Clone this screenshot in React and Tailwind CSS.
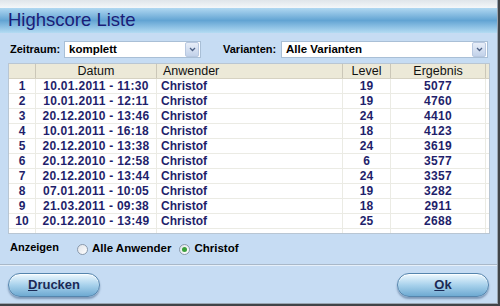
import React from 'react';

const rows = [
  ['1', '10.01.2011 - 11:30', 'Christof', '19', '5077'],
  ['2', '10.01.2011 - 12:11', 'Christof', '19', '4760'],
  ['3', '20.12.2010 - 13:46', 'Christof', '24', '4410'],
  ['4', '10.01.2011 - 16:18', 'Christof', '18', '4123'],
  ['5', '20.12.2010 - 13:38', 'Christof', '24', '3619'],
  ['6', '20.12.2010 - 12:58', 'Christof', '6', '3577'],
  ['7', '20.12.2010 - 13:44', 'Christof', '24', '3357'],
  ['8', '07.01.2011 - 10:05', 'Christof', '19', '3282'],
  ['9', '21.03.2011 - 09:38', 'Christof', '18', '2911'],
  ['10', '20.12.2010 - 13:49', 'Christof', '25', '2688'],
];

function Select({ value, className }) {
  return (
    <div className={`h-[17px] bg-white border border-[#a9bfd6] flex items-center ${className}`}>
      <span className="flex-1 pl-[4px] text-[11.5px] font-bold text-black leading-none">{value}</span>
      <div className="w-[14px] h-[15px] mr-[1px] rounded-[2px] bg-gradient-to-b from-[#e8eef8] to-[#c2d2ea] border border-[#b8c8e0] flex items-center justify-center">
        <svg width="7" height="5" viewBox="0 0 7 5">
          <path d="M1 1 L3.5 3.5 L6 1" fill="none" stroke="#4d6185" strokeWidth="1.3" />
        </svg>
      </div>
    </div>
  );
}

function Radio({ checked, label }) {
  return (
    <label className="flex items-center gap-[4px]">
      <span className="w-[11px] h-[11px] rounded-full border border-[#8a99ab] bg-gradient-to-br from-[#dfe3e8] to-white flex items-center justify-center">
        {checked && <span className="w-[5px] h-[5px] rounded-full bg-[#3aa03a]" />}
      </span>
      <span className="text-[11.5px] font-bold text-black">{label}</span>
    </label>
  );
}

function AquaButton({ children }) {
  return (
    <button className="w-[92px] h-[24px] rounded-full border border-[#5585ad] bg-gradient-to-b from-[#eef8fe] via-[#a8d2ec] to-[#6eaad2] shadow-[0_2px_2px_rgba(40,70,110,0.45),inset_0_1px_1px_rgba(255,255,255,0.9)] text-[13px] font-bold text-[#1b2a55]">
      {children}
    </button>
  );
}

export default function App() {
  const cols = 'grid grid-cols-[27px_121px_186px_48px_1fr]';
  return (
    <div className="w-[500px] h-[306px] bg-[#404448] font-['Liberation_Sans',Arial,sans-serif] overflow-hidden">
      <div className="w-[498px] h-[304px] bg-[#c6dcf3] border-r border-b border-[#9aa6b2] flex flex-col">
        <div className="h-[8px] bg-gradient-to-b from-[#dfe5ea] to-[#f4f7f9]" />
        <div className="h-[25px] bg-gradient-to-b from-[#b0d8f1] via-[#62a4d3] to-[#b4dcf3] flex items-center pl-[8px]">
          <span className="text-[18.5px] text-[#1a1d78] leading-none">Highscore Liste</span>
        </div>

        <div className="mt-[8px] h-[17px] flex items-center pl-[10px]">
          <span className="w-[54px] text-[11px] font-bold text-black">Zeitraum:</span>
          <Select value="komplett" className="w-[137px]" />
          <span className="ml-[22px] w-[58px] text-[11px] font-bold text-black">Varianten:</span>
          <Select value="Alle Varianten" className="w-[207px]" />
        </div>

        <div className="mt-[5px] ml-[8px] w-[482px] h-[171px] bg-white border border-[#b9c6d3] flex flex-col">
          <div className={`${cols} h-[15px] bg-[#ece9d8] border-b border-[#d6d2c2] text-[12.5px] text-[#111] leading-[14px]`}>
            <div className="border-r border-[#cbc7b8]" />
            <div className="text-center border-r border-[#cbc7b8]">Datum</div>
            <div className="pl-[6px] border-r border-[#cbc7b8]">Anwender</div>
            <div className="text-center border-r border-[#cbc7b8]">Level</div>
            <div className="text-center border-r border-[#cbc7b8] mr-[3px]">Ergebnis</div>
          </div>
          {rows.map((r) => (
            <div key={r[0]} className={`${cols} h-[15px] border-b border-[#ebebe4] text-[12px] font-bold text-[#1f1f6b] leading-[14px]`}>
              <div className="text-center border-r border-[#ebebe4]">{r[0]}</div>
              <div className="text-center tracking-[0.3px] border-r border-[#ebebe4]">{r[1]}</div>
              <div className="pl-[4px] border-r border-[#ebebe4]">{r[2]}</div>
              <div className="text-center border-r border-[#ebebe4]">{r[3]}</div>
              <div className="text-center tracking-[0.3px] border-r border-[#ebebe4] mr-[3px]">{r[4]}</div>
            </div>
          ))}
          <div className={`${cols} flex-1`}>
            <div className="border-r border-[#ebebe4]" />
            <div className="border-r border-[#ebebe4]" />
            <div className="border-r border-[#ebebe4]" />
            <div className="border-r border-[#ebebe4]" />
            <div className="border-r border-[#ebebe4] mr-[3px]" />
          </div>
        </div>

        <div className="h-[30px] flex items-center pl-[10px]">
          <span className="w-[67px] text-[11px] font-bold text-black -mt-[3px]">Anzeigen</span>
          <div className="flex items-center gap-[8px]">
            <Radio label="Alle Anwender" />
            <Radio checked label="Christof" />
          </div>
        </div>

        <div className="h-[2px] border-t border-[#a9b8c8] border-b border-b-[#e6f0fa]" />

        <div className="flex-1 flex items-center justify-between px-[8px] pt-[1px]">
          <AquaButton><span className="underline">D</span>rucken</AquaButton>
          <AquaButton><span className="underline">O</span>k</AquaButton>
        </div>
      </div>
    </div>
  );
}
